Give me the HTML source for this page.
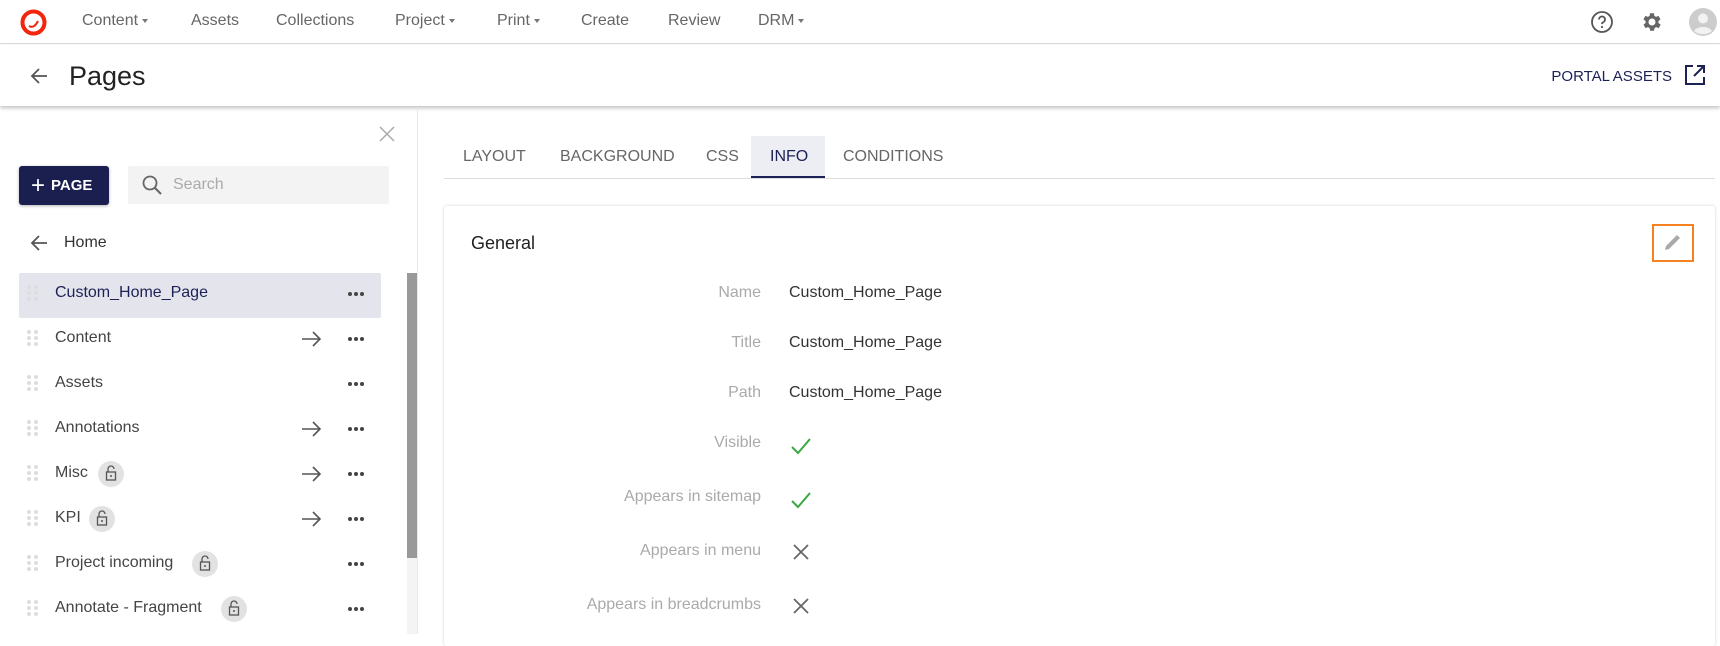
<!DOCTYPE html>
<html><head><meta charset="utf-8"><style>
*{margin:0;padding:0;box-sizing:border-box}
body{width:1720px;height:634px;overflow:hidden;background:#fff;font-family:"Liberation Sans",sans-serif;position:relative;color:#333}
.a{position:absolute;white-space:nowrap}
.nav{font-size:16px;color:#666;top:12px}
.car{display:inline-block;border-left:3.5px solid transparent;border-right:3.5px solid transparent;border-top:4px solid #777;margin-left:4px;vertical-align:middle}
.row{font-size:16px;color:#444}
.lbl{font-size:16px;color:#aaa;text-align:right;right:959px}
.val{font-size:16px;color:#333;left:789px}
</style></head><body>
<!-- top nav -->
<div class="a" style="left:0;top:0;width:1720px;height:44px;border-bottom:1px solid #ddd"></div>
<svg class="a" style="left:20px;top:9px" width="27" height="27" viewBox="0 0 27 27"><circle cx="13.5" cy="13.5" r="11" fill="none" stroke="#f2250f" stroke-width="4"/><path d="M9 17 Q14 20 18 12" stroke="#f2250f" stroke-width="2" fill="none"/></svg>
<div class="a nav" style="left:82px">Content<span class="car"></span></div>
<div class="a nav" style="left:191px">Assets</div>
<div class="a nav" style="left:276px">Collections</div>
<div class="a nav" style="left:395px">Project<span class="car"></span></div>
<div class="a nav" style="left:497px">Print<span class="car"></span></div>
<div class="a nav" style="left:581px">Create</div>
<div class="a nav" style="left:668px">Review</div>
<div class="a nav" style="left:758px">DRM<span class="car"></span></div>
<svg class="a" style="left:1590px;top:10px" width="24" height="24" viewBox="0 0 24 24"><circle cx="12" cy="12" r="10" fill="none" stroke="#555" stroke-width="1.8"/><path d="M9 9.5a3 3 0 1 1 4 2.8c-.8.4-1 1-1 1.8" fill="none" stroke="#555" stroke-width="1.8"/><circle cx="12" cy="17" r="1.1" fill="#555"/></svg>
<svg class="a" style="left:1640px;top:10px" width="24" height="24" viewBox="0 0 24 24"><path fill="#666" d="M19.4 13a7.5 7.5 0 0 0 0-2l2.1-1.6-2-3.5-2.5 1a7.6 7.6 0 0 0-1.7-1L15 3.2h-4l-.4 2.7a7.6 7.6 0 0 0-1.7 1l-2.5-1-2 3.5L6.6 11a7.5 7.5 0 0 0 0 2l-2.1 1.6 2 3.5 2.5-1a7.6 7.6 0 0 0 1.7 1l.4 2.7h4l.4-2.7a7.6 7.6 0 0 0 1.7-1l2.5 1 2-3.5zM13 15.5a3.5 3.5 0 1 1 0-7 3.5 3.5 0 0 1 0 7z" transform="translate(-1 0)"/></svg>
<svg class="a" style="left:1689px;top:8px" width="28" height="28" viewBox="0 0 28 28"><circle cx="14" cy="14" r="14" fill="#ccc"/><circle cx="14" cy="10.5" r="5" fill="#f2f2f2"/><path d="M5 23a10 7 0 0 1 18 0 14 14 0 0 1-18 0z" fill="#f2f2f2"/></svg>
<!-- header -->
<div class="a" style="left:0;top:45px;width:1720px;height:61px;box-shadow:0 2px 4px rgba(0,0,0,.25);background:#fff"></div>
<svg class="a" style="left:28px;top:65px" width="22" height="22" viewBox="0 0 22 22"><path d="M19 11H4M11 4l-7 7 7 7" fill="none" stroke="#555" stroke-width="1.8"/></svg>
<div class="a" style="left:69px;top:61px;font-size:27px;color:#222">Pages</div>
<div class="a" style="right:48px;top:68px;font-size:15px;color:#1c2156">PORTAL ASSETS</div>
<svg class="a" style="left:1684px;top:64px" width="22" height="22" viewBox="0 0 22 22"><path d="M9 2H2v18h18v-7M13 2h7v7M20 2L10 12" fill="none" stroke="#1c2156" stroke-width="2"/></svg>
<!-- left panel -->
<div class="a" style="left:417px;top:107px;width:1px;height:527px;background:#e8e8e8"></div>
<div class="a" style="left:407px;top:273px;width:10px;height:285px;background:#999"></div>
<div class="a" style="left:407px;top:558px;width:10px;height:76px;background:#f4f4f4"></div>
<svg class="a" style="left:379px;top:126px" width="16" height="16" viewBox="0 0 16 16"><path d="M1 1l14 14M15 1L1 15" stroke="#aaa" stroke-width="1.5"/></svg>
<div class="a" style="left:19px;top:166px;width:90px;height:39px;background:#1b1f50;border-radius:3px;box-shadow:0 1px 3px rgba(0,0,0,.3);color:#fff;font-size:15px;font-weight:bold;line-height:39px;padding-left:12px"><span style="font-size:24px;font-weight:normal;vertical-align:-3px;margin-right:6px">+</span>PAGE</div>
<div class="a" style="left:128px;top:166px;width:261px;height:38px;background:#f3f3f3;border-radius:2px"></div>
<svg class="a" style="left:141px;top:174px" width="22" height="22" viewBox="0 0 22 22"><circle cx="9" cy="9" r="6.5" fill="none" stroke="#666" stroke-width="1.8"/><path d="M14 14l6 6" stroke="#666" stroke-width="2"/></svg>
<div class="a" style="left:173px;top:176px;font-size:16px;color:#aaa">Search</div>
<svg class="a" style="left:28px;top:232px" width="22" height="22" viewBox="0 0 22 22"><path d="M19 11H4M11 4l-7 7 7 7" fill="none" stroke="#555" stroke-width="1.8"/></svg>
<div class="a" style="left:64px;top:234px;font-size:16px;color:#333">Home</div>
<div class="a" style="left:19px;top:273px;width:362px;height:45px;background:#e4e5ec;border-radius:2px"></div>
<!-- rows -->
<div class="a row" style="left:55px;top:284px;color:#1c2156">Custom_Home_Page</div>
<div class="a row" style="left:55px;top:329px">Content</div>
<div class="a row" style="left:55px;top:374px">Assets</div>
<div class="a row" style="left:55px;top:419px">Annotations</div>
<div class="a row" style="left:55px;top:464px">Misc</div>
<div class="a row" style="left:55px;top:509px">KPI</div>
<div class="a row" style="left:55px;top:554px">Project incoming</div>
<div class="a row" style="left:55px;top:599px">Annotate - Fragment</div>
<svg class="a" style="left:0;top:0" width="420" height="634">
<defs>
<g id="d" fill="#ddd"><circle cx="29" cy="0" r="2"/><circle cx="36" cy="0" r="2"/><circle cx="29" cy="6" r="2"/><circle cx="36" cy="6" r="2"/><circle cx="29" cy="12" r="2"/><circle cx="36" cy="12" r="2"/></g>
<g id="m" fill="#444"><circle cx="350" cy="0" r="2"/><circle cx="356" cy="0" r="2"/><circle cx="362" cy="0" r="2"/></g>
<path id="ar" d="M302 0h18M313-7l7 7-7 7" fill="none" stroke="#555" stroke-width="1.6"/>
<g id="lk"><circle cx="0" cy="0" r="13" fill="#e2e2e2"/><rect x="-4.5" y="-2" width="9" height="8" fill="none" stroke="#555" stroke-width="1.3"/><path d="M-3-2v-3a3 3 0 0 1 6 0" fill="none" stroke="#555" stroke-width="1.3"/><circle cx="0" cy="2" r="1" fill="#555"/></g>
</defs>
<use href="#d" y="287"/><use href="#d" y="332"/><use href="#d" y="377"/><use href="#d" y="422"/><use href="#d" y="467"/><use href="#d" y="512"/><use href="#d" y="557"/><use href="#d" y="602"/>
<use href="#m" y="294"/><use href="#m" y="339"/><use href="#m" y="384"/><use href="#m" y="429"/><use href="#m" y="474"/><use href="#m" y="519"/><use href="#m" y="564"/><use href="#m" y="609"/>
<use href="#ar" y="339"/><use href="#ar" y="429"/><use href="#ar" y="474"/><use href="#ar" y="519"/>
<use href="#lk" x="111" y="474"/><use href="#lk" x="102" y="519"/><use href="#lk" x="205" y="564"/><use href="#lk" x="234" y="609"/>
</svg>
<!-- tabs -->
<div class="a" style="left:444px;top:178px;width:1271px;height:1px;background:#ddd"></div>
<div class="a" style="left:751px;top:136px;width:74px;height:42px;background:#eceef3;border-bottom:2px solid #1c2156"></div>
<div class="a" style="left:463px;top:148px;font-size:16px;color:#666">LAYOUT</div>
<div class="a" style="left:560px;top:148px;font-size:16px;color:#666">BACKGROUND</div>
<div class="a" style="left:706px;top:148px;font-size:16px;color:#666">CSS</div>
<div class="a" style="left:770px;top:148px;font-size:16px;color:#1c2156">INFO</div>
<div class="a" style="left:843px;top:148px;font-size:16px;color:#666">CONDITIONS</div>
<!-- card -->
<div class="a" style="left:444px;top:206px;width:1271px;height:440px;background:#fff;border-radius:3px;box-shadow:0 0 3px rgba(0,0,0,.18)"></div>
<div class="a" style="left:471px;top:233px;font-size:18px;color:#222">General</div>
<div class="a" style="left:1652px;top:224px;width:42px;height:38px;border:2px solid #f58220"></div>
<svg class="a" style="left:1663px;top:232px" width="20" height="20" viewBox="0 0 20 20"><path d="M2 18l1-4L14 3l3 3L6 17z" fill="#aaa"/></svg>
<div class="a lbl" style="top:284px">Name</div><div class="a val" style="top:284px">Custom_Home_Page</div>
<div class="a lbl" style="top:334px">Title</div><div class="a val" style="top:334px">Custom_Home_Page</div>
<div class="a lbl" style="top:384px">Path</div><div class="a val" style="top:384px">Custom_Home_Page</div>
<div class="a lbl" style="top:434px">Visible</div>
<div class="a lbl" style="top:488px">Appears in sitemap</div>
<div class="a lbl" style="top:542px">Appears in menu</div>
<div class="a lbl" style="top:596px">Appears in breadcrumbs</div>
<svg class="a" style="left:790px;top:434px" width="24" height="200"><g fill="none" stroke="#3aa845" stroke-width="2"><path d="M2 13l6 6L20 5"/><path d="M2 67l6 6L20 59"/></g><g stroke="#666" stroke-width="1.8"><path d="M4 111l14 14M18 111L4 125"/><path d="M4 165l14 14M18 165L4 179"/></g></svg>
</body></html>
